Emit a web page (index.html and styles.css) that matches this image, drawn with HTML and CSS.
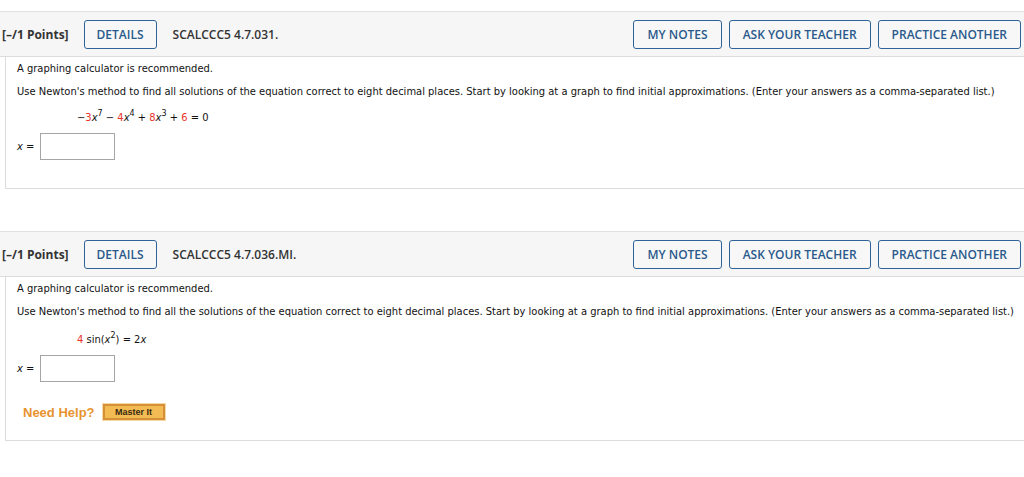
FILE: index.html
```html
<!DOCTYPE html>
<html>
<head>
<meta charset="utf-8">
<link rel="stylesheet" href="styles.css">
</head>
<body>
<div class="question first">
  <div class="qhead">
    <span class="points">[–/1 Points]</span>
    <span class="btn details">DETAILS</span>
    <span class="qid">SCALCCC5 4.7.031.</span>
    <span class="spacer"></span>
    <span class="btn">MY NOTES</span>
    <span class="btn">ASK YOUR TEACHER</span>
    <span class="btn">PRACTICE ANOTHER</span>
  </div>
  <div class="qbody">
    <p class="line l1">A graphing calculator is recommended.</p>
    <p class="line l2">Use Newton's method to find all solutions of the equation correct to eight decimal places. Start by looking at a graph to find initial approximations. (Enter your answers as a comma-separated list.)</p>
    <p class="eq">−<span class="r">3</span><i>x</i><sup>7</sup> − <span class="r">4</span><i>x</i><sup>4</sup> + <span class="r">8</span><i>x</i><sup>3</sup> + <span class="r">6</span> = 0</p>
    <div class="answer"><i>x</i>&nbsp;=&nbsp;<span class="box"></span></div>
  </div>
</div>
<div class="question second">
  <div class="qhead">
    <span class="points">[–/1 Points]</span>
    <span class="btn details">DETAILS</span>
    <span class="qid">SCALCCC5 4.7.036.MI.</span>
    <span class="spacer"></span>
    <span class="btn">MY NOTES</span>
    <span class="btn">ASK YOUR TEACHER</span>
    <span class="btn">PRACTICE ANOTHER</span>
  </div>
  <div class="qbody">
    <p class="line l1">A graphing calculator is recommended.</p>
    <p class="line l2">Use Newton's method to find all the solutions of the equation correct to eight decimal places. Start by looking at a graph to find initial approximations. (Enter your answers as a comma-separated list.)</p>
    <p class="eq eq2"><span class="r">4</span> sin(<i>x</i><sup>2</sup>) = 2<i>x</i></p>
    <div class="answer"><i>x</i>&nbsp;=&nbsp;<span class="box"></span></div>
    <div class="help"><span class="need">Need Help?</span><span class="master">Master It</span></div>
  </div>
</div>
</body>
</html>
```
FILE: styles.css
```css
html, body { margin: 0; padding: 0; background: #fff; }
body { padding-top: 11px; font-family: "DejaVu Sans", Verdana, sans-serif; color: #111; }
.question { width: 1030px; }
.second { margin-top: 42px; }
.qhead {
  display: flex; align-items: center;
  height: 44px;
  background: #f6f6f6;
  border-top: 1px solid #e2e2e2;
  border-bottom: 1px solid #dcdcdc;
  font-family: "Open Sans", sans-serif;
  font-size: 12px;
  padding-left: 2px;
}
.points { font-weight: 700; color: #333; }
.qid { font-weight: 600; color: #333; margin-left: 16px; }
.spacer { flex: 1; }
.btn {
  box-sizing: border-box;
  height: 29px;
  display: inline-flex; align-items: center; justify-content: center;
  padding: 0 13px;
  border: 1px solid #2e6399;
  border-radius: 3px;
  color: #2a5a8c;
  font-weight: 600;
  margin-left: 7px;
  background: #f7f7f7;
}
.btn.details { margin-left: 15px; padding: 0 12px; }
.qhead .btn:last-child { margin-right: 9px; }
.qbody {
  margin-left: 5px;
  border-left: 1px solid #dcdcdc;
  border-bottom: 1px solid #dcdcdc;
  padding-left: 11px;
  font-size: 9.95px;
}
.first .qbody { height: 131px; }
.second .qbody { height: 163px; }
.line { margin: 0; line-height: 12px; }
.l1 { padding-top: 6px; }
.l2 { margin-top: 11px; }
.eq { margin: 13px 0 0 60px; line-height: 14px; }
.eq2 { margin-top: 15px; }
.r { color: #e8322b; }
sup { font-size: 8px; vertical-align: 5px; line-height: 0; }
.answer { display: flex; align-items: center; margin-top: 8px; }
.answer i { font-style: italic; }
.box {
  display: inline-block; box-sizing: border-box;
  width: 75px; height: 27px;
  border: 1px solid #a5a5a5;
  margin-left: 2px;
}
.help { display: flex; align-items: center; margin-top: 22px; padding-left: 6px; }
.need { font-family: "Liberation Sans", Arial, sans-serif; font-weight: 700; font-size: 13px; color: #e8932f; }
.master {
  margin-left: 8px;
  box-sizing: border-box;
  width: 62px; height: 16px;
  display: inline-flex; align-items: center; justify-content: center;
  background: #f3bb53;
  border: 2px solid #d58f36;
  outline: 1px solid #f5d9a8;
  font-family: "Liberation Sans", Arial, sans-serif;
  font-weight: 700; font-size: 9px; color: #3a2a10;
}
```
